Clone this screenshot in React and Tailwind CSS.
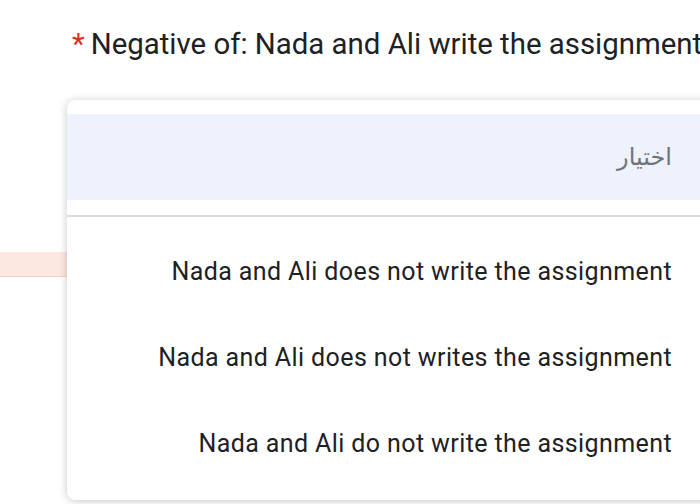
import React from 'react'

const options = [
    'Nada and Ali does not write the assignment',
    'Nada and Ali does not writes the assignment',
    'Nada and Ali do not write the assignment',
]

const App = () => {
    return (
        <div
            className="relative w-[700px] h-[504px] overflow-hidden bg-white"
            style={{ fontFamily: "Roboto, 'DejaVu Sans', sans-serif" }}
        >
            {/* Question title */}
            <div className="pt-[24px] pl-[72px] whitespace-nowrap text-[29.4px] leading-[40px] text-[#202124]">
                <span className="text-[#d93025] mr-[6px]">*</span>
                <span>Negative of: Nada and Ali write the assignment</span>
            </div>

            {/* Underlying field (partly hidden by the menu) */}
            <div className="mt-[188px] w-[80px] h-[25px] bg-[#fce8de] border-b border-[#f1d6c8]" />

            {/* Dropdown menu */}
            <div className="absolute left-[67px] top-[100px] w-[643px] h-[400px] bg-white rounded-[8px] shadow-[0_1px_8px_rgba(0,0,0,0.22)] pt-[14px]">
                <div dir="rtl" className="h-[86px] bg-[#edf2fc] flex items-center pr-[38px] pl-4">
                    <span className="text-[24px] text-[#70757a]" style={{ fontFamily: "'DejaVu Sans', sans-serif" }}>
                        اختيار
                    </span>
                </div>
                <div className="mt-[15px] h-[2px] bg-[#dadce0]" />
                <div className="pt-[12px]">
                    {options.map((o) => (
                        <div key={o} className="h-[86px] flex items-center justify-end pr-[38px] text-[25px] tracking-[0.4px] text-[#202124] whitespace-nowrap">
                            {o}
                        </div>
                    ))}
                </div>
            </div>
        </div>
    )
}

export default App
